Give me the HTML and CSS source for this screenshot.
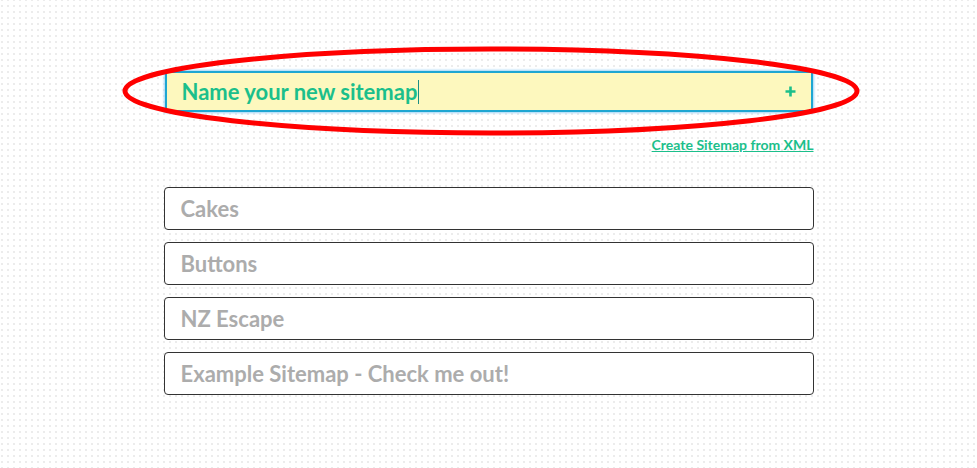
FILE: index.html
```html
<!DOCTYPE html>
<html lang="en">
<head>
<meta charset="utf-8">
<title>Sitemaps</title>
<link rel="stylesheet" href="styles.css">
</head>
<body>
<main class="page">
  <div class="new-input">
    <span class="name">Name your new sitemap</span><span class="caret"></span>
    <svg class="plus" width="11" height="11" viewBox="0 0 11 11"><path d="M5.5 0.5v10M0.5 5.5h10" stroke="#1bbf8b" stroke-width="2.6" fill="none"/></svg>
  </div>
  <div class="xml-row"><a class="xml-link" href="#">Create Sitemap from XML</a></div>
  <ul class="list">
    <li class="item">Cakes</li>
    <li class="item">Buttons</li>
    <li class="item">NZ Escape</li>
    <li class="item">Example Sitemap - Check me out!</li>
  </ul>
</main>
<svg class="annot" width="977" height="468" viewBox="0 0 977 468">
  <ellipse cx="491" cy="91" rx="366" ry="42" fill="none" stroke="#ff0000" stroke-width="5"/>
</svg>
</body>
</html>
```
FILE: styles.css
```css
html, body {
  margin: 0;
  padding: 0;
}
body {
  width: 977px;
  height: 468px;
  overflow: hidden;
  position: relative;
  font-family: Lato, "Open Sans", sans-serif;
  font-weight: 700;
  background-color: #ececec;
  background-image:
    linear-gradient(to right, #ffffff 4px, transparent 4px),
    linear-gradient(to bottom, #ffffff 4px, transparent 4px);
  background-size: 6px 6px;
  background-position: -3px 1px;
}
.page {
  width: 650px;
  margin: 0 auto;
  padding-top: 71px;
}
.new-input {
  box-sizing: border-box;
  height: 41px;
  margin: 0 1px;
  display: flex;
  align-items: center;
  padding: 0 15px 0 15px;
  background: #fdf8be;
  border: 2px solid #1ea6d2;
  box-shadow: 0 0 2px 1px #9fd3f6;
  color: #1bbf8b;
  font-size: 22px;
}
.name {
  white-space: nowrap;
}
.caret {
  display: inline-block;
  width: 1px;
  height: 24px;
  background: #1a8f86;
  margin-left: 1px;
}
.plus {
  margin-left: auto;
  display: block;
}
.xml-row {
  display: flex;
  justify-content: flex-end;
  margin-top: 24px;
}
.xml-link {
  color: #1bbf8b;
  font-size: 14px;
  line-height: 17px;
  text-decoration: underline;
}
.list {
  list-style: none;
  margin: 34px 0 0 0;
  padding: 0;
  display: flex;
  flex-direction: column;
  gap: 12px;
}
.item {
  box-sizing: border-box;
  height: 43px;
  display: flex;
  align-items: center;
  padding: 0 16px;
  background: #ffffff;
  border: 1px solid #333333;
  border-radius: 4px;
  color: #acacac;
  font-size: 22px;
}
.annot {
  position: absolute;
  left: 0;
  top: 0;
  pointer-events: none;
}
```
